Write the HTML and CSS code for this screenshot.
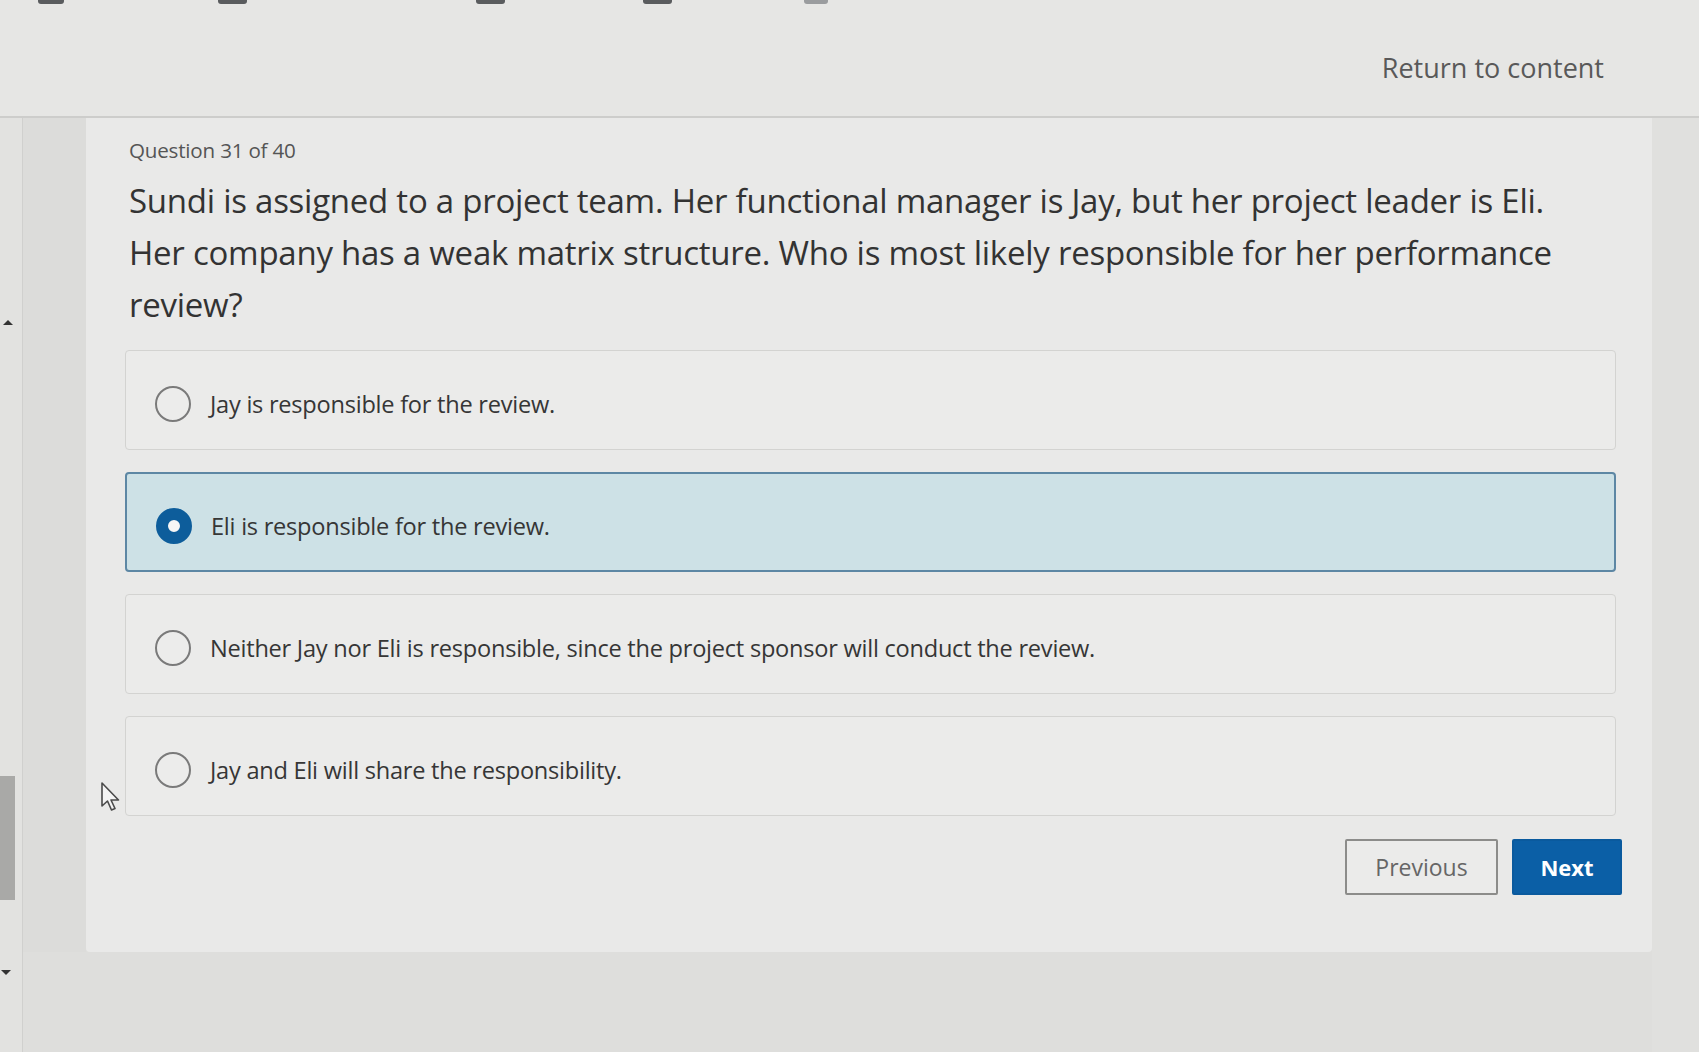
FILE: index.html
```html
<!DOCTYPE html>
<html lang="en">
<head>
<meta charset="utf-8">
<title>Question 31 of 40</title>
<link rel="stylesheet" href="styles.css">
</head>
<body>
<div class="page">
  <header class="topbar">
    <div class="stubs">
      <span class="stub s1"></span>
      <span class="stub s2"></span>
      <span class="stub s3"></span>
      <span class="stub s4"></span>
      <span class="stub s5"></span>
    </div>
    <a class="return-link" href="#">Return to content</a>
  </header>
  <div class="main">
    <div class="rail">
      <span class="arrow-up"></span>
      <span class="thumb"></span>
      <span class="arrow-down"></span>
    </div>
    <div class="gutter"></div>
    <section class="card">
      <div class="q-label">Question 31 of 40</div>
      <p class="q-text">Sundi is assigned to a project team. Her functional manager is Jay, but her project leader is Eli.<br>Her company has a weak matrix structure. Who is most likely responsible for her performance<br>review?</p>
      <div class="options">
        <label class="option">
          <span class="radio"></span>
          <span class="opt-text">Jay is responsible for the review.</span>
        </label>
        <label class="option selected">
          <span class="radio"></span>
          <span class="opt-text">Eli is responsible for the review.</span>
        </label>
        <label class="option">
          <span class="radio"></span>
          <span class="opt-text">Neither Jay nor Eli is responsible, since the project sponsor will conduct the review.</span>
        </label>
        <label class="option">
          <span class="radio"></span>
          <span class="opt-text">Jay and Eli will share the responsibility.</span>
        </label>
      </div>
      <div class="nav">
        <button class="btn btn-prev">Previous</button>
        <button class="btn btn-next">Next</button>
      </div>
      <svg class="cursor" width="22" height="32" viewBox="0 0 22 32" aria-hidden="true">
        <path d="M2 2 L2 25 L7.5 20 L11.5 29 L15 27.5 L11 19 L18.5 19 Z" fill="#f4f4f4" stroke="#4a4a4a" stroke-width="1.6" stroke-linejoin="round"/>
      </svg>
    </section>
    <div class="right-space"></div>
  </div>
</div>
</body>
</html>
```

FILE: styles.css
```css
html, body {
  margin: 0;
  padding: 0;
}
body {
  width: 1699px;
  height: 1052px;
  overflow: hidden;
  background: #dededc;
  font-family: "Open Sans", "Noto Sans", "Liberation Sans", sans-serif;
}
.page {
  width: 1699px;
  height: 1052px;
  display: flex;
  flex-direction: column;
}
.topbar {
  height: 116px;
  flex: 0 0 auto;
  background: #e6e6e4;
  border-bottom: 2px solid #cdcdcb;
  display: flex;
  flex-direction: column;
}
.stubs {
  display: flex;
  height: 5px;
}
.stub {
  display: block;
  height: 4px;
  background: #5a5c5e;
  border-radius: 0 0 3px 3px;
}
.s1 { margin-left: 38px; width: 26px; }
.s2 { margin-left: 154px; width: 29px; }
.s3 { margin-left: 229px; width: 29px; }
.s4 { margin-left: 138px; width: 29px; }
.s5 { margin-left: 132px; width: 24px; background: #9a9c9e; }
.return-link {
  align-self: flex-end;
  margin-top: 47px;
  margin-right: 95px;
  font-size: 27px;
  line-height: 32px;
  color: #595959;
  text-decoration: none;
}
.main {
  flex: 1 1 auto;
  display: flex;
  align-items: flex-start;
}
.rail {
  width: 22px;
  height: 934px;
  background: #e2e2e0;
  border-right: 1px solid #d0d0ce;
  display: flex;
  flex-direction: column;
  align-items: flex-start;
}
.arrow-up {
  margin-top: 202px;
  margin-left: 3px;
  width: 0;
  height: 0;
  border-left: 5px solid transparent;
  border-right: 5px solid transparent;
  border-bottom: 5px solid #333;
}
.thumb {
  margin-top: 451px;
  width: 15px;
  height: 124px;
  background: #a9a9a7;
}
.arrow-down {
  margin-top: 70px;
  margin-left: 1px;
  width: 0;
  height: 0;
  border-left: 5px solid transparent;
  border-right: 5px solid transparent;
  border-top: 5px solid #333;
}
.gutter {
  width: 63px;
  height: 834px;
  background: #dcdcda;
}
.card {
  position: relative;
  width: 1566px;
  height: 834px;
  box-sizing: border-box;
  background: #e9e9e8;
  border-radius: 0 0 4px 4px;
  padding: 18px 36px 0 39px;
}
.q-label {
  margin-left: 4px;
  font-size: 20.6px;
  line-height: 28px;
  color: #555;
  letter-spacing: -0.2px;
}
.q-text {
  margin: 11px 0 0 4px;
  font-size: 33px;
  line-height: 52px;
  color: #333;
  white-space: nowrap;
  letter-spacing: -0.25px;
}
.options {
  margin-top: 19px;
  display: flex;
  flex-direction: column;
  gap: 22px;
}
.option {
  height: 100px;
  box-sizing: border-box;
  border: 1.5px solid #d3d3d1;
  border-radius: 4px;
  background: #ebebea;
  display: flex;
  align-items: center;
  padding-left: 29px;
  padding-top: 8px;
  gap: 19px;
}
.option.selected {
  background: #cde1e6;
  border: 2px solid #5d87a4;
}
.radio {
  width: 36px;
  height: 36px;
  box-sizing: border-box;
  border: 2px solid #7a7a7a;
  border-radius: 50%;
  background: #ececeb;
  flex: 0 0 auto;
}
.option.selected .radio {
  border: 12px solid #0d5d9b;
  background: #f6f6f6;
}
.opt-text {
  font-size: 23.6px;
  line-height: 30px;
  color: #363636;
  letter-spacing: -0.25px;
}
.nav {
  margin-top: 23px;
  margin-right: -6px;
  display: flex;
  justify-content: flex-end;
  gap: 14px;
}
.btn {
  height: 56px;
  box-sizing: border-box;
  font-family: "Open Sans", "Noto Sans", "Liberation Sans", sans-serif;
  font-size: 23px;
  border-radius: 2px;
  padding: 0;
}
.btn-prev {
  width: 153px;
  background: #ebebea;
  border: 2px solid #8c8c8a;
  color: #666;
}
.btn-next {
  width: 110px;
  background: #0b5fa6;
  border: 2px solid #0a5a9e;
  color: #fff;
  font-weight: 700;
  font-size: 22px;
}
.cursor {
  position: absolute;
  left: 14px;
  top: 663px;
}
.right-space {
  flex: 1 1 auto;
  height: 934px;
  background: #e0e0de;
}
```
